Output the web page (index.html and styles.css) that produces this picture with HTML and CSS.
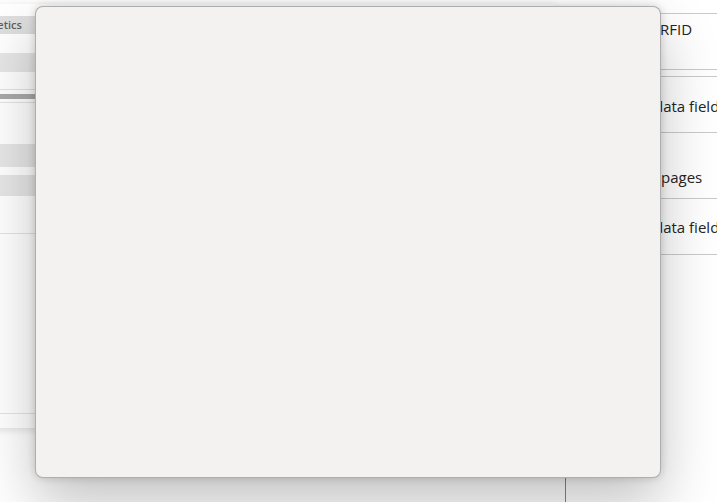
FILE: index.html
```html
<!DOCTYPE html>
<html lang="en">
<head>
<meta charset="utf-8">
<title>Dialog</title>
<link rel="stylesheet" href="styles.css">
</head>
<body>
<div class="page">
  <div class="left">
    <div class="card">
      <div class="card-head">Aesthetics</div>
      <div class="band band-a"></div>
      <div class="rule rule-a"></div>
      <div class="bar"></div>
      <div class="rule rule-b"></div>
      <div class="band band-b"></div>
      <div class="band band-c"></div>
      <div class="rule rule-c"></div>
      <div class="rule rule-d"></div>
    </div>
  </div>
  <div class="right">
    <div class="row row-1"><span class="cell cell-rfid">RFID</span></div>
    <div class="row-gap"></div>
    <div class="row row-2"><span class="cell cell-data">data field</span></div>
    <div class="row row-3"><span class="cell cell-pages">pages</span></div>
    <div class="row row-4"><span class="cell cell-data">data field</span></div>
  </div>
</div>
<div class="dialog" role="dialog" aria-modal="true"></div>
</body>
</html>
```
FILE: styles.css
```css
* { box-sizing: border-box; }
html, body { margin: 0; padding: 0; }
body {
  width: 717px;
  height: 502px;
  overflow: hidden;
  background: #ffffff;
  font-family: "Open Sans", "Noto Sans", sans-serif;
  color: #242424;
}
.page {
  display: flex;
  height: 502px;
}
.left {
  flex: 0 0 565px;
}
.card {
  margin-top: 4px;
  margin-left: -45px;
  width: 600px;
  height: 424px;
  background: #ffffff;
  box-shadow: 0 2px 8px rgba(0,0,0,0.12);
  padding-top: 12px;
  display: flex;
  flex-direction: column;
}
.card-head {
  height: 18px;
  background: #dedede;
  padding-left: 12px;
  font-size: 11px;
  font-weight: 600;
  line-height: 18px;
  color: #5f5f5f;
}
.band { background: #e6e6e6; }
.band-a { margin-top: 19px; height: 19px; }
.rule { height: 1px; background: #e3e3e3; }
.rule-a { margin-top: 17px; }
.bar { margin-top: 4px; height: 5px; background: #a9a9a9; }
.rule-b { margin-top: 3px; }
.band-b { margin-top: 41px; height: 23px; }
.band-c { margin-top: 8px; height: 21px; }
.rule-c { margin-top: 37px; }
.rule-d { margin-top: 179px; }

.right {
  flex: 1 0 auto;
  margin-top: 13px;
  border-top: 1px solid #cacaca;
  border-left: 1px solid #858585;
  display: flex;
  flex-direction: column;
}
.row {
  border-bottom: 1px solid #cacaca;
  font-size: 15px;
  line-height: 20px;
  white-space: nowrap;
}
.row-1 { height: 56px; padding-top: 5px; }
.row-gap { height: 7px; border-bottom: 1px solid #cacaca; }
.row-2 { height: 56px; padding-top: 19px; }
.row-3 { height: 66px; padding-top: 34px; }
.row-4 { height: 56px; padding-top: 18px; }
.cell { display: block; }
.cell-rfid { padding-left: 94px; }
.cell-data { padding-left: 88px; }
.cell-pages { padding-left: 95px; }

.dialog {
  position: fixed;
  left: 35px;
  top: 6px;
  width: 626px;
  height: 472px;
  background: #f3f2f1;
  border: 1px solid rgba(0,0,0,0.28);
  border-radius: 8px;
  box-shadow: 0 0 10px rgba(0,0,0,0.18), 0 26px 58px rgba(0,0,0,0.24);
}
```
